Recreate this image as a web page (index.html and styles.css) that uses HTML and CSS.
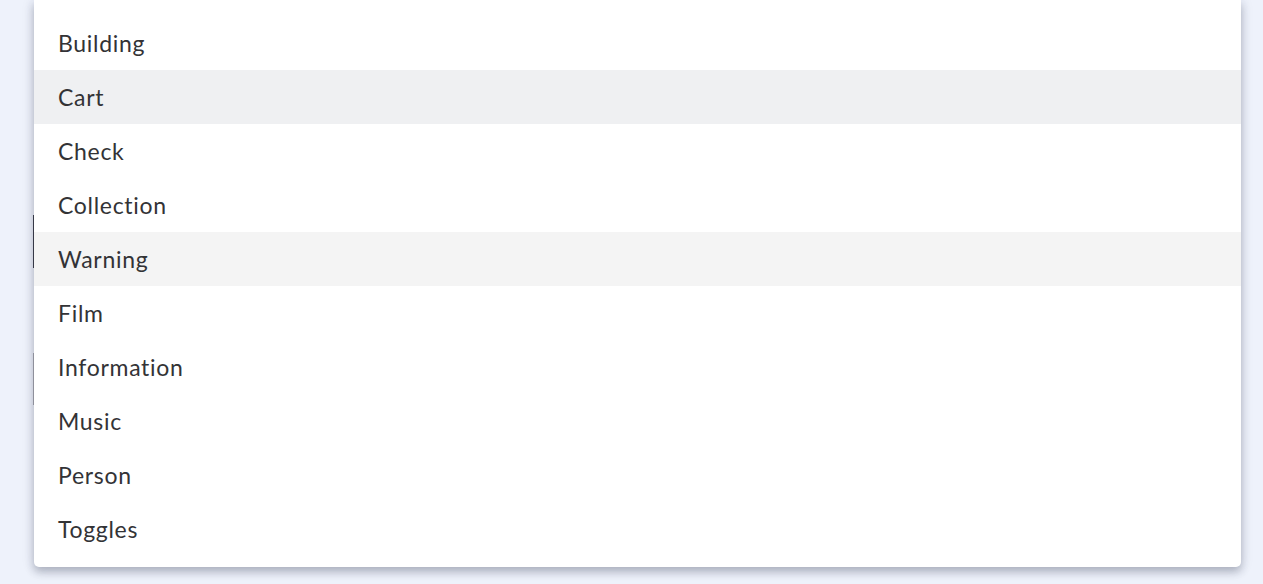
FILE: index.html
```html
<!DOCTYPE html>
<html>
<head>
<meta charset="utf-8">
<link rel="stylesheet" href="styles.css">
</head>
<body>
<div class="page">
  <div class="under under-a"></div>
  <div class="under under-b"></div>
  <ul class="menu">
    <li class="item">Building</li>
    <li class="item hover">Cart</li>
    <li class="item">Check</li>
    <li class="item">Collection</li>
    <li class="item selected">Warning</li>
    <li class="item">Film</li>
    <li class="item">Information</li>
    <li class="item">Music</li>
    <li class="item">Person</li>
    <li class="item">Toggles</li>
  </ul>
</div>
</body>
</html>
```
FILE: styles.css
```css
html, body {
  margin: 0;
  padding: 0;
  background: #eef2fb;
  height: 100%;
  overflow: hidden;
}
.page {
  position: relative;
  padding-left: 34px;
}
.under {
  position: absolute;
  left: 33px;
  width: 40px;
  border-left: 1px solid #3a3d4a;
  z-index: 0;
}
.under-a {
  top: 215px;
  height: 53px;
}
.under-b {
  top: 353px;
  height: 52px;
  border-left-color: #a4a6ae;
}
.menu {
  position: relative;
  z-index: 1;
  list-style: none;
  margin: 0;
  padding: 16px 0 11px;
  width: 1207px;
  background: #ffffff;
  border-radius: 0 0 5px 5px;
  box-shadow: 0 5px 8px rgba(40, 45, 70, 0.28), 0 1px 14px rgba(40, 45, 70, 0.12);
}
.item {
  height: 54px;
  display: flex;
  align-items: center;
  padding-left: 24px;
  font-family: "Lato", "Noto Sans", sans-serif;
  font-size: 23px;
  color: #333336;
  letter-spacing: 0.7px;
}
.item.hover {
  background: #eff0f2;
}
.item.selected {
  background: #f4f4f4;
}
```
